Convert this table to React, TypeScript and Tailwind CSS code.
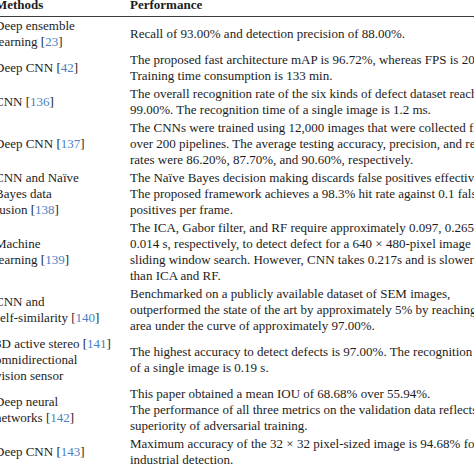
import React from "react";

type Row = {
  method: string[];
  ref: string;
  refLine?: number;
  perf: string[];
};

const rows: Row[] = [
  {
    method: ["Deep ensemble", "learning"],
    ref: "23",
    perf: ["Recall of 93.00% and detection precision of 88.00%."],
  },
  {
    method: ["Deep CNN"],
    ref: "42",
    perf: [
      "The proposed fast architecture mAP is 96.72%, whereas FPS is 20.",
      "Training time consumption is 133 min.",
    ],
  },
  {
    method: ["CNN"],
    ref: "136",
    perf: [
      "The overall recognition rate of the six kinds of defect dataset reached",
      "99.00%. The recognition time of a single image is 1.2 ms.",
    ],
  },
  {
    method: ["Deep CNN"],
    ref: "137",
    perf: [
      "The CNNs were trained using 12,000 images that were collected from",
      "over 200 pipelines. The average testing accuracy, precision, and recall",
      "rates were 86.20%, 87.70%, and 90.60%, respectively.",
    ],
  },
  {
    method: ["CNN and Naïve", "Bayes data", "fusion"],
    ref: "138",
    perf: [
      "The Naïve Bayes decision making discards false positives effectively.",
      "The proposed framework achieves a 98.3% hit rate against 0.1 false",
      "positives per frame.",
    ],
  },
  {
    method: ["Machine", "learning"],
    ref: "139",
    perf: [
      "The ICA, Gabor filter, and RF require approximately 0.097, 0.265, and",
      "0.014 s, respectively, to detect defect for a 640 × 480-pixel image by",
      "sliding window search. However, CNN takes 0.217s and is slower",
      "than ICA and RF.",
    ],
  },
  {
    method: ["CNN and", "self-similarity"],
    ref: "140",
    perf: [
      "Benchmarked on a publicly available dataset of SEM images,",
      "outperformed the state of the art by approximately 5% by reaching an",
      "area under the curve of approximately 97.00%.",
    ],
  },
  {
    method: ["3D active stereo", "omnidirectional", "vision sensor"],
    ref: "141",
    refLine: 0,
    perf: [
      "The highest accuracy to detect defects is 97.00%. The recognition time",
      "of a single image is 0.19 s.",
    ],
  },
  {
    method: ["Deep neural", "networks"],
    ref: "142",
    perf: [
      "This paper obtained a mean IOU of 68.68% over 55.94%.",
      "The performance of all three metrics on the validation data reflects the",
      "superiority of adversarial training.",
    ],
  },
  {
    method: ["Deep CNN"],
    ref: "143",
    perf: [
      "Maximum accuracy of the 32 × 32 pixel-sized image is 94.68% for",
      "industrial detection.",
    ],
  },
];

function MethodCell({ row }: { row: Row }) {
  const at = row.refLine ?? row.method.length - 1;
  return (
    <div>
      {row.method.map((line, i) => (
        <div key={i} className="whitespace-nowrap">
          {line}
          {i === at && (
            <>
              {" "}[<span className="text-[#4a7fc2]">{row.ref}</span>]
            </>
          )}
        </div>
      ))}
    </div>
  );
}

export default function App() {
  return (
    <div className="w-[474px] h-[474px] overflow-hidden bg-white font-['Liberation_Serif',serif] text-[13px] leading-[16px] text-[#1c1c1c]">
      <div className="w-[640px] -ml-[5px]">
        {/* Header */}
        <div className="grid grid-cols-[135px_1fr] -mt-[3px] pb-[3px] border-b border-[#3c3c3c] font-bold">
          <div>Methods</div>
          <div>Performance</div>
        </div>

        {/* Body */}
        {rows.map((row, i) => (
          <div key={i} className="grid grid-cols-[135px_1fr] items-center py-px">
            <MethodCell row={row} />
            <div>
              {row.perf.map((line, j) => (
                <div key={j} className="whitespace-nowrap">
                  {line}
                </div>
              ))}
            </div>
          </div>
        ))}
      </div>
    </div>
  );
}
